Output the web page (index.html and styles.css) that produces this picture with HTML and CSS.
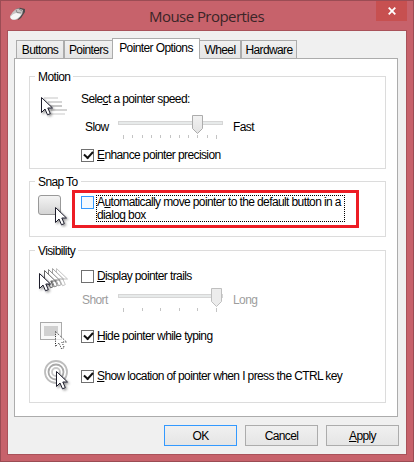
FILE: index.html
```html
<!DOCTYPE html>
<html lang="en">
<head>
    <meta charset="UTF-8">
    <title>Mouse Properties</title>
    <link rel="stylesheet" href="styles.css">
</head>
<body>
    <svg width="0" height="0" class="defs">
        <defs>
            <path id="arrow" d="M.5 .5V15.5L4 12L6.5 17.8L9.3 16.6L6.8 11H11.5Z"/>
            <linearGradient id="face" x1="0" y1="0" x2="0" y2="1">
                <stop offset="0" stop-color="#f4f4f4"/>
                <stop offset="1" stop-color="#d4d4d4"/>
            </linearGradient>
            <linearGradient id="thumb" x1="0" y1="0" x2="0" y2="1">
                <stop offset="0" stop-color="#f2f2f2"/>
                <stop offset="1" stop-color="#e2e2e2"/>
            </linearGradient>
            <filter id="shadow" x="-30%" y="-30%" width="180%" height="180%">
                <feDropShadow dx="1.5" dy="1.5" stdDeviation="1" flood-opacity=".4"/>
            </filter>
        </defs>
    </svg>

    <div class="window">
        <div class="titlebar">
            <svg class="app-icon" width="18" height="16" viewBox="0 0 18 16">
                <path d="M7 2L11 .8L16 2L16 5L12 11L9 13L7 8Z" fill="#4f494b"/>
                <path d="M1 9Q3 5 7 2L10 1.500L14 3Q14 7 11 10Q9 13 6 13Q1 13 1 9Z" fill="#c6c4c4"/>
                <path d="M1.500 9.500Q4 6.500 7 6L12 6.500Q12 9 9.500 10.500Q7 13 4 12.500Q1 12 1.500 9.500Z" fill="#f6f6f6"/>
                <path d="M7 2.500L8 5.500L12 6M10 2L13 4" fill="none" stroke="#777" stroke-width=".8"/>
            </svg>
            <h1>Mouse Properties</h1>
            <button class="close" aria-label="Close">
                <svg width="8" height="8" viewBox="0 0 8 8"><path d="M.7 .7L7.300 7.300M7.300 .7L.7 7.300" stroke="#fff" stroke-width="1.8"/></svg>
            </button>
        </div>

        <div class="client">
            <div class="tabs">
                <div class="tab tab-buttons"><span>Buttons</span></div>
                <div class="tab tab-pointers"><span>Pointers</span></div>
                <div class="tab active"><span>Pointer Options</span></div>
                <div class="tab tab-wheel"><span>Wheel</span></div>
                <div class="tab tab-hardware"><span>Hardware</span></div>
            </div>

            <div class="page">
                <div class="group motion">
                    <div class="legend"><span>Motion</span></div>
                    <svg class="icon" width="34" height="28" viewBox="0 0 34 28">
                        <g stroke-width="2">
                            <path d="M6 3H20" stroke="#e2e2e2"/>
                            <path d="M10 7H24" stroke="#d6d6d6"/>
                            <path d="M12 11H24" stroke="#c8c8c8"/>
                            <path d="M13 15H29" stroke="#d4d4d4"/>
                            <path d="M12 19H27" stroke="#e4e4e4"/>
                        </g>
                        <use href="#arrow" x="3" y="2" fill="#fff" stroke="#1d1d2c" filter="url(#shadow)"/>
                    </svg>
                    <div class="fields">
                        <div class="text speed"><span>Sele<u>c</u>t a pointer speed:</span></div>
                        <div class="slider-row">
                            <div class="text from"><span>Slow</span></div>
                            <svg width="106" height="26" viewBox="0 0 106 26">
                                <rect x=".5" y="6.500" width="104" height="3" fill="#e7eaea" stroke="#d6d6d6"/>
                                <path d="M5.500 20v4M98.500 20v4M14.500 20v3M24.500 20v3M33.500 20v3M42.500 20v3M52.500 20v3M61.500 20v3M70.500 20v3M79.500 20v3M89.500 20v3" stroke="#c4c4c4"/>
                                <path d="M74.500 .5H84.500V13.500L79.500 18.500L74.500 13.500Z" fill="url(#thumb)" stroke="#acacac"/>
                            </svg>
                            <div class="text to"><span>Fast</span></div>
                        </div>
                        <div class="check enhance">
                            <i class="box on"></i>
                            <div class="text"><span><u>E</u>nhance pointer precision</span></div>
                        </div>
                    </div>
                </div>

                <div class="group snap">
                    <div class="legend"><span>Snap To</span></div>
                    <svg class="icon" width="34" height="34" viewBox="0 0 34 34">
                        <rect x="1.500" y="1.500" width="22" height="19" rx="2.500" fill="url(#face)" stroke="#999"/>
                        <use href="#arrow" x="18" y="13" fill="#fff" stroke="#1d1d2c" filter="url(#shadow)"/>
                    </svg>
                    <div class="check">
                        <i class="box hot"></i>
                        <div class="text focus"><span>A<u>u</u>tomatically move pointer to the default button in a</span><br><span>dialog box</span></div>
                    </div>
                    <div class="highlight"></div>
                </div>

                <div class="group visibility">
                    <div class="legend"><span>Visibility</span></div>
                    <div class="option trails">
                        <svg class="icon" width="36" height="32" viewBox="0 0 36 32">
                            <use href="#arrow" x="18" y="1" fill="#fff" stroke="#c4c4c4"/>
                            <use href="#arrow" x="14" y="1" fill="#fff" stroke="#a4a4a4"/>
                            <use href="#arrow" x="10" y="2" fill="#fff" stroke="#858585"/>
                            <use href="#arrow" x="6" y="3" fill="#fff" stroke="#626262"/>
                            <use href="#arrow" x="1" y="6" fill="#fff" stroke="#1d1d2c" filter="url(#shadow)"/>
                        </svg>
                        <div class="fields">
                            <div class="check">
                                <i class="box"></i>
                                <div class="text"><span><u>D</u>isplay pointer trails</span></div>
                            </div>
                            <div class="slider-row disabled">
                                <div class="text from"><span>Short</span></div>
                                <svg width="106" height="26" viewBox="0 0 106 26">
                                    <rect x=".5" y="6.500" width="104" height="3" fill="#e7eaea" stroke="#d6d6d6"/>
                                    <path d="M5.500 20v4M98.500 20v4M24.500 20v3M42.500 20v3M61.500 20v3M79.500 20v3" stroke="#c4c4c4"/>
                                    <path d="M93.500 .5H103.500V13.500L98.500 18.500L93.500 13.500Z" fill="#ececec" stroke="#bfbfbf"/>
                                </svg>
                                <div class="text to"><span>Long</span></div>
                            </div>
                        </div>
                    </div>
                    <div class="option hide">
                        <svg class="icon" width="36" height="32" viewBox="0 0 36 32">
                            <rect x="3.500" y="2.500" width="21" height="17" fill="#f8f8f8" stroke="#aaa"/>
                            <rect x="7" y="6" width="14" height="10" fill="#d0d0d0"/>
                            <use href="#arrow" x="18" y="11" fill="#fff" fill-opacity=".7" stroke="#222" stroke-dasharray="1 1.300"/>
                        </svg>
                        <div class="check">
                            <i class="box on"></i>
                            <div class="text"><span><u>H</u>ide pointer while typing</span></div>
                        </div>
                    </div>
                    <div class="option locate">
                        <svg class="icon" width="36" height="34" viewBox="0 0 36 34">
                            <g fill="#fff" stroke-width="1.800">
                                <circle cx="19" cy="13" r="11" stroke="#bdbdbd"/>
                                <circle cx="19" cy="13" r="7.500" stroke="#a9a9a9"/>
                                <circle cx="19" cy="13" r="4" stroke="#c8c8c8"/>
                            </g>
                            <use href="#arrow" x="19" y="12" fill="#fff" stroke="#1d1d2c" filter="url(#shadow)"/>
                        </svg>
                        <div class="check">
                            <i class="box on"></i>
                            <div class="text"><span><u>S</u>how location of pointer when I press the CTRL key</span></div>
                        </div>
                    </div>
                </div>
            </div>

            <div class="actions">
                <button class="default"><span>OK</span></button>
                <button><span>Cancel</span></button>
                <button><span><u>A</u>pply</span></button>
            </div>
        </div>
    </div>
</body>
</html>
```
FILE: styles.css
```css
* {
    margin: 0;
    padding: 0;
    box-sizing: border-box;
}

body {
    font-family: "Liberation Sans", Arial, sans-serif;
    font-size: 12px;
    line-height: 14px;
    letter-spacing: -0.61px;
    color: #000;
    white-space: nowrap;
    overflow: hidden;
}

.defs {
    position: absolute;
}

svg {
    display: block;
    flex: none;
}

u {
    text-underline-offset: 1px;
    text-decoration-thickness: 1px;
    text-decoration-skip-ink: none;
}

.window {
    width: 414px;
    height: 462px;
    padding: 0 6px 6px;
    background: #c7626b;
    border: 1px solid #9b4c54;
}

.titlebar {
    display: flex;
    height: 29px;
}

.app-icon {
    margin: 6px 0 0 2px;
}

h1 {
    flex: 1;
    padding: 5px 0 0 122px;
    font-family: "Open Sans", sans-serif;
    font-size: 15px;
    font-weight: 400;
    line-height: 20px;
    letter-spacing: -0.55px;
    color: #3a2527;
}

.close {
    display: flex;
    align-items: center;
    justify-content: center;
    width: 31px;
    height: 20px;
    border: 0;
    background: #c75050;
}

.client {
    width: 400px;
    height: 425px;
    padding: 7px 6px 0;
    background: #f0f0f0;
    border: 1px solid #a9525a;
}

.tabs {
    display: flex;
    align-items: flex-end;
    height: 21px;
    padding-left: 2px;
}

.tab {
    height: 19px;
    padding-top: 2px;
    border: 1px solid #acacac;
    background: linear-gradient(#f0f0f0, #e5e5e5);
    text-align: center;
}

.tab-buttons {
    width: 48px;
}

.tab-pointers {
    width: 49px;
}

.tab.active {
    width: 88px;
    height: 21px;
    margin-left: -1px;
    border-bottom: 0;
    background: #fff;
    z-index: 1;
}

.tab-wheel {
    width: 42px;
    margin-left: -1px;
}

.tab-hardware {
    width: 56px;
}

.page {
    width: 384px;
    height: 359px;
    margin-top: -1px;
    padding: 17px 11px 0 14px;
    border: 1px solid #acacac;
    background: #fff;
}

.group {
    display: grid;
    grid-template-columns: 51px auto;
    align-content: start;
    width: 357px;
    border: 1px solid #dcdcdc;
}

.legend {
    grid-column: 1 / -1;
    justify-self: start;
    height: 14px;
    margin: -7px 0 0 5px;
    padding: 0 3px;
    background: #fff;
}

.motion {
    height: 93px;
}

.motion .icon {
    margin: 11px 0 0 8px;
}

.speed {
    margin-top: 8px;
}

.slider-row {
    display: flex;
    height: 26px;
}

.motion .slider-row {
    margin-top: 9px;
}

.from {
    width: 37px;
    padding: 5px 0 0 4px;
}

.to {
    padding: 5px 0 0 9px;
}

.disabled {
    color: #9d9d9d;
}

.disabled .from {
    padding: 5px 0 0 1px;
}

.check {
    display: flex;
    align-items: center;
    height: 14px;
}

.check .text {
    padding-left: 3px;
}

.enhance {
    margin-top: 7px;
}

.box {
    flex: none;
    position: relative;
    width: 13px;
    height: 13px;
    border: 1px solid #707070;
    background: #fff;
}

.box.on::after {
    content: "";
    position: absolute;
    left: 2px;
    top: 1px;
    width: 7px;
    height: 4px;
    border: solid #111;
    border-width: 0 0 2px 2px;
    transform: rotate(-48deg);
}

.box.hot {
    border-color: #3399ff;
    background: #f3f9ff;
}

.snap {
    position: relative;
    height: 56px;
    margin-top: 12px;
}

.snap .icon {
    margin: 5px 0 0 7px;
}

.snap .check {
    height: 27px;
    margin-top: 6px;
    align-items: flex-start;
}

.snap .box {
    margin-top: 1px;
}

.snap .focus {
    width: 249px;
    height: 27px;
    margin-left: 2px;
    padding: 0;
    border: 1px dotted #000;
    line-height: 13px;
}

.highlight {
    position: absolute;
    left: 42px;
    top: 8px;
    width: 287px;
    height: 38px;
    border: 3px solid #ed1c24;
}

.visibility {
    height: 153px;
    margin-top: 13px;
}

.option {
    display: grid;
    grid-column: 1 / -1;
    grid-template-columns: 51px auto;
    align-items: start;
}

.option .icon {
    margin-left: 7px;
}

.trails {
    height: 60px;
    margin-top: 9px;
}

.trails .icon {
    margin-left: 8px;
}

.trails .check {
    margin-top: 2px;
}

.trails .slider-row {
    margin-top: 5px;
}

.hide {
    height: 41px;
}

.hide .icon {
    margin-top: -7px;
}

.hide .check {
    margin-top: 2px;
}

.locate .icon {
    margin-top: -9px;
}

.locate .check {
    margin-top: 1px;
}

.actions {
    display: flex;
    justify-content: flex-end;
    gap: 8px;
    margin: 8px 1px 0 0;
}

.actions button {
    width: 73px;
    height: 21px;
    border: 1px solid #acacac;
    background: linear-gradient(#f0f0f0, #e5e5e5);
    font: inherit;
    letter-spacing: inherit;
    color: #000;
}

.actions .default {
    border-color: #3399ff;
}
```
